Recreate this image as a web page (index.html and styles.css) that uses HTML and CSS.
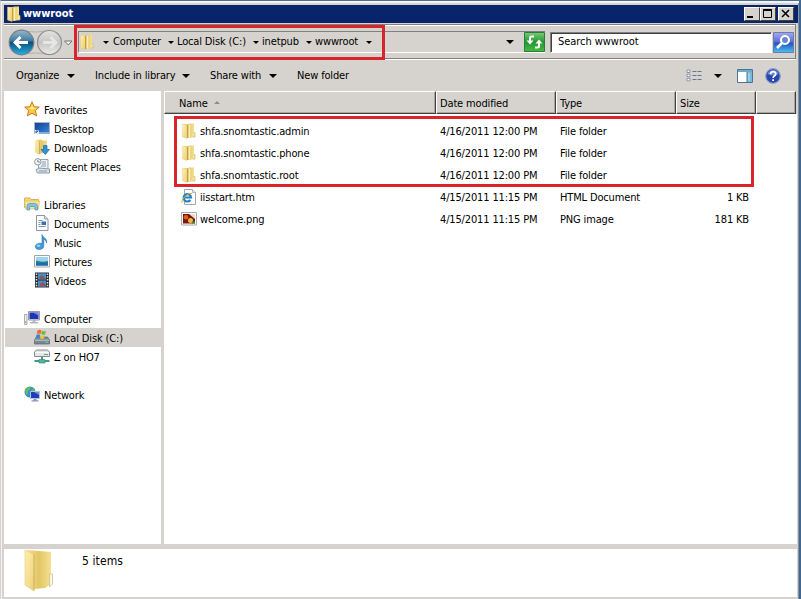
FILE: index.html
```
<!DOCTYPE html>
<html lang="en">
<head>
  <meta charset="UTF-8">
  <meta name="viewport" content="width=device-width, initial-scale=1.0">
  <title>wwwroot</title>
  <link rel="stylesheet" href="styles.css">
</head>
<body>
  <!-- shared icons and gradients -->
  <svg class="defs" width="0" height="0">
    <defs>
      <linearGradient id="gold" x1="0" x2="1" y1="0" y2="0">
        <stop offset="0" stop-color="#f6e08c"/><stop offset=".5" stop-color="#e3c566"/><stop offset="1" stop-color="#f6e190"/>
      </linearGradient>
      <linearGradient id="gold-front" x1="0" x2="1" y1="0" y2="1">
        <stop offset="0" stop-color="#fff0b0"/><stop offset="1" stop-color="#ecd077"/>
      </linearGradient>
      <linearGradient id="screen" x1="0" x2="1" y1="0" y2="1">
        <stop offset="0" stop-color="#123e94"/><stop offset="1" stop-color="#3e86dc"/>
      </linearGradient>
      <linearGradient id="back" x1="0" x2="0" y1="0" y2="1">
        <stop offset="0" stop-color="#9cb6c6"/><stop offset=".42" stop-color="#3f7da4"/><stop offset=".5" stop-color="#07517f"/><stop offset="1" stop-color="#27b2e4"/>
      </linearGradient>
      <linearGradient id="forward" x1="0" x2="0" y1="0" y2="1">
        <stop offset="0" stop-color="#e4e4e3"/><stop offset=".5" stop-color="#c5c5c4"/><stop offset="1" stop-color="#e9e9e8"/>
      </linearGradient>
      <linearGradient id="green" x1="0" x2="0" y1="0" y2="1">
        <stop offset="0" stop-color="#7ecb78"/><stop offset=".5" stop-color="#239632"/><stop offset="1" stop-color="#46bd43"/>
      </linearGradient>
      <linearGradient id="blue" x1="0" x2="0" y1="0" y2="1">
        <stop offset="0" stop-color="#aaa8ec"/><stop offset=".48" stop-color="#5a6cd4"/><stop offset=".52" stop-color="#2450bd"/><stop offset="1" stop-color="#4bc3f0"/>
      </linearGradient>
      <symbol id="folder" viewBox="0 0 16 16">
        <path d="M2 1h5l1-.5h5v13.500l-5 1-6-1z" fill="url(#gold)"/>
        <path d="M1.500 1l4.500 1v13.500l-4.500-1.500z" fill="url(#gold-front)" stroke="#e0c878" stroke-width=".4"/>
        <path d="M6.500 2v13" stroke="#c2a142" stroke-width="1"/>
        <path d="M8.500 1.500v13" stroke="#fbf1c0" stroke-width="1.400"/>
        <path d="M12.500 9.500h1.500v4.500h-2.500" fill="#f6e7a5" stroke="#cdb968" stroke-width=".7"/>
      </symbol>
      <symbol id="star" viewBox="0 0 16 16">
        <path d="M8 .8l2.100 4.900 5.200.4-4 3.500 1.400 5.400L8 12.200l-4.700 2.700 1.300-5.300L.7 6.100l5.200-.4z" fill="#ffc83a" stroke="#c9792a"/>
        <path d="M8 3l1.200 3.500 3 .4-4.200 1.500-4-1.500 3-.4z" fill="#ffec8e"/>
      </symbol>
      <symbol id="desktop" viewBox="0 0 16 16">
        <path d="M.5 2.500h15v11h-15z" fill="url(#screen)" stroke="#a7b4c4"/>
        <path d="M1 12h14v1.500h-14z" fill="#6fb0e6"/>
        <path d="M1 10h4v4h-4z" fill="#d9e9f8"/><path d="M2 13v-2h2M2 13l2.500-2.500" stroke="#2d6cb5" fill="none"/>
      </symbol>
      <symbol id="downloads" viewBox="0 0 16 16">
        <path d="M2 1l5-.5 1 1h5v12l-10 1.500z" fill="url(#gold)"/>
        <path d="M1 1l4.500 1.500v12.500l-4.500-1.500z" fill="url(#gold-front)"/>
        <path d="M5.500 2.500v12.500" stroke="#bea045" stroke-width=".7"/>
        <path d="M9.500 6.500h3.500v4h2.500l-4.200 5-4.300-5h2.500z" fill="#2f94d6" stroke="#1869a8" stroke-width=".7"/>
      </symbol>
      <symbol id="recent" viewBox="0 0 16 16">
        <path d="M4.500 1.500h9.500v10h-9.500z" fill="#eef1f4" stroke="#9ba4ac"/>
        <path d="M8 4h4M8 6h4M7 8h5" stroke="#8fa2b2"/>
        <path d="M2 12l3-2 10.500 1v4h-12z" fill="#dce2e7" stroke="#8d98a2"/>
        <path d="M5 13h8" stroke="#7d9db6"/>
        <circle cx="3.800" cy="3.800" r="3.200" fill="#f7f8fa" stroke="#8d959e"/><path d="M3.800 1.800v2.200h2" stroke="#5a636d" stroke-width=".8" fill="none"/>
      </symbol>
      <symbol id="libraries" viewBox="0 0 16 16">
        <path d="M.5 2h5.500l1 1.500h7.500v8h-14z" fill="#f3d97c" stroke="#cfb35c"/>
        <path d="M.5 5h15l-1 8h-13z" fill="#f7e28e" stroke="#dcc26c" stroke-width=".7"/>
        <path d="M3 14v-3.500q0-3 3-3h4.500q3 0 3 3v3.500h-2.500v-2.500q0-1-1-1h-3.500q-1 0-1 1v2.500z" fill="#7ec4ea" stroke="#4b92be" stroke-width=".7"/>
      </symbol>
      <symbol id="documents" viewBox="0 0 16 16">
        <path d="M2.500.5h8l3.500 3.500v11.500h-11.500z" fill="#fafbfd" stroke="#8c959e"/>
        <path d="M10.500.5v3.500h3.500" fill="#d7dde3" stroke="#8c959e" stroke-width=".8"/>
        <path d="M4.500 5.500h4M4.500 7.500h2M4.500 9.500h2M4.500 11.500h7" stroke="#7d95b0"/><path d="M7.500 6.500h4.500v3.500h-4.500z" fill="#3f70a8"/>
      </symbol>
      <symbol id="music" viewBox="0 0 16 16">
        <path d="M8 .5c.6 3 5.500 3.500 4.500 8.500-.3-2.500-1.500-3.300-2.700-3.800v6.800c0 2-2 3.500-4.500 3.500s-4-1.200-4-3c0-2.400 3.500-4 6.700-2.800z" fill="#3e9ad8" stroke="#2672ab" stroke-width=".6"/>
        <ellipse cx="4.500" cy="11.800" rx="2" ry="1.300" fill="#91d1f1"/>
      </symbol>
      <symbol id="pictures" viewBox="0 0 16 16">
        <path d="M.5 2.500h15v11.500h-15z" fill="#fff" stroke="#9ca5ac"/><path d="M2 4h12v8.500h-12z" fill="#9bd4ee"/>
        <path d="M2 7.500q5 2 12 .5v4.500h-12z" fill="#2c7d86"/><path d="M2 10.500q6-1 12 0v2h-12z" fill="#1d6ab0"/>
      </symbol>
      <symbol id="videos" viewBox="0 0 16 16">
        <path d="M1 .5h14v15h-14z" fill="#272b33"/>
        <path d="M4 1.200h8v6.300h-8zM4 8.500h8v6.300h-8z" fill="#4a8fc4"/>
        <path d="M5 5l3-2 3 3v1.500h-5zM5 12l4-2 3 3v1.500h-5z" fill="#8c5463"/>
        <path d="M2.500 1.500v13M13.500 1.500v13" stroke="#dfe5ea" stroke-width="1.500" stroke-dasharray="1.500 1.300"/>
      </symbol>
      <symbol id="computer" viewBox="0 0 16 16">
        <path d="M4.500 1.500h11v8.500h-11z" fill="#e0dfe0" stroke="#989aa5"/><path d="M5.500 2.500h9v6.500h-9z" fill="#1b35b5"/><path d="M9 2.500h5.500v3z" fill="#7690e6"/>
        <path d="M8.500 10h3v2h2.500v1.500h-8v-1.500h2.500z" fill="#b4b6c0"/>
        <path d="M.5 4.500h2.500v10h-2.500z" fill="#eeeef0" stroke="#9699a2" stroke-width=".8"/><path d="M1 12h1.500" stroke="#4c9b4e"/>
      </symbol>
      <symbol id="disk" viewBox="0 0 16 16">
        <path d="M.5 11l2-3h11l2 3v4h-15z" fill="#7a8995" stroke="#53616e" stroke-width=".7"/><path d="M1 11.200h14" stroke="#c3cdd5"/><path d="M11.500 13.300h2.500" stroke="#62dc64" stroke-width="1.200"/>
        <path d="M3.500 1.500q2-1.500 4 0l-1 3.500q-2-1-3.800 0z" fill="#ea6b32"/><path d="M8.200 1.700q2 1 3.800 0l-1 3.700q-2 1-3.800-.3z" fill="#6eb73e"/>
        <path d="M2.500 5.700q2-1 3.800 0l-1 3.500q-2-1-3.700 0z" fill="#3987ce"/><path d="M7 6q2 1 3.800 0l-1 3.500q-2 1-3.800-.3z" fill="#f7c431"/>
      </symbol>
      <symbol id="netdrive" viewBox="0 0 16 16">
        <path d="M.5 4l2-2h11l2 2v4.500h-15z" fill="#e4e6e8" stroke="#868b90"/><path d="M1 4.500h14" stroke="#fff"/><path d="M10 6.500h4" stroke="#5aaa63"/>
        <path d="M8 9v3.500M.5 13h15" stroke="#439b86" stroke-width="2"/><path d="M5 11.500h6v3.500h-6z" fill="#55b4a0" stroke="#2f8270" stroke-width=".6"/>
      </symbol>
      <symbol id="network" viewBox="0 0 16 16">
        <circle cx="6" cy="6" r="5.500" fill="#2e8fd1"/><path d="M1 4q3-4 6-3l-1 3-2 1v3l-2 1zM7 4l3-2 1.500 4-3 1z" fill="#67bb5a"/>
        <path d="M6.500 5.500h9v7h-9z" fill="#1c3eb8" stroke="#b8c3e2"/><path d="M10 6h5v3z" fill="#6e90e8"/><path d="M9.500 13h3v1.300h2v1.200h-7v-1.200h2z" fill="#8c98b2"/>
      </symbol>
      <symbol id="htm" viewBox="0 0 16 16">
        <path d="M3.500.5h8l3 3v12h-11z" fill="#fdfdfd" stroke="#a2a7ab"/><path d="M11.500.5v3h3" fill="#dfe3e6" stroke="#a2a7ab" stroke-width=".8"/>
        <path d="M9.300 11a3.700 3.700 0 1 1 .7-2.500h-6.500" fill="none" stroke="#2080c6" stroke-width="2.200"/>
        <path d="M1.200 13.800q-1.500-2 2.500-6t7.500-3.500" fill="none" stroke="#e0b02f" stroke-width="1"/>
      </symbol>
      <symbol id="png" viewBox="0 0 16 16">
        <path d="M.5 1.500h15v12.500h-15z" fill="#fbfbfb" stroke="#a8a8a8"/><path d="M2 3h12v9.500h-12z" fill="#7c1710"/>
        <circle cx="5" cy="6.300" r="2.300" fill="#d6641e"/><circle cx="9.500" cy="9.500" r="2.500" fill="#f0b93c"/><path d="M8 3h6v5z" fill="#f3dfc0"/><path d="M11 10.500h3v2h-3z" fill="#4a8340"/>
      </symbol>
    </defs>
  </svg>

  <div class="window">
    <header class="titlebar">
      <svg class="icon"><use href="#folder"/></svg>
      <h1 class="title">wwwroot</h1>
      <div class="controls">
        <button class="control"><svg width="13" height="12"><path d="M2 9h6" stroke="#000" stroke-width="2"/></svg></button>
        <button class="control"><svg width="13" height="12"><path d="M2 2h9" stroke="#000" stroke-width="2"/><path d="M2.500 1v8.500h8v-8.500" fill="none" stroke="#000"/></svg></button>
        <button class="control control-close"><svg width="13" height="12"><path d="M3 2l7 7M10 2l-7 7" stroke="#000" stroke-width="1.600"/></svg></button>
      </div>
    </header>

    <nav class="navbar">
      <svg class="travel" width="70" height="33" viewBox="0 0 70 33">
        <path d="M17 4q14 4 29 0M17 29q14-4 29 0" fill="none" stroke="#aeb0b1"/>
        <circle cx="17.500" cy="16.500" r="12.300" fill="url(#back)" stroke="#767f88" stroke-width="1.200"/>
        <path d="M11 16.500h13M16.500 11l-5.500 5.500 5.500 5.500" fill="none" stroke="#fff" stroke-width="2.800"/>
        <circle cx="45.500" cy="16.500" r="12" fill="url(#forward)" stroke="#909294" stroke-width="1.200"/>
        <path d="M39 16.500h13M46.500 11l5.500 5.500-5.500 5.500" fill="none" stroke="#e6e6e6" stroke-width="2.800"/>
        <path d="M60.500 15h7.500l-3.700 4z" fill="#eee" stroke="#777"/>
      </svg>
      <div class="address">
        <svg class="icon"><use href="#folder"/></svg>
        <ol class="crumbs">
          <li class="crumb crumb-root"><i class="arrow small"></i></li>
          <li class="crumb crumb-computer">Computer<i class="arrow small"></i></li>
          <li class="crumb crumb-disk">Local Disk (C:)<i class="arrow small"></i></li>
          <li class="crumb crumb-inetpub">inetpub<i class="arrow small"></i></li>
          <li class="crumb crumb-wwwroot">wwwroot<i class="arrow small"></i></li>
        </ol>
        <i class="arrow"></i>
        <svg class="refresh" width="21" height="20" viewBox="0 0 21 20">
          <path d="M.5.500h20v19h-20z" fill="url(#green)" stroke="#2c7c35"/>
          <path d="M10 4.500h-2.500q-1.500 0-1.500 1.500v3M11 15.500h2.500q1.500 0 1.500-1.500v-3" fill="none" stroke="#fff" stroke-width="2"/>
          <path d="M2.500 8.500h7l-3.500 4zM11.500 11.500h7l-3.500-4z" fill="#fff"/>
        </svg>
      </div>
      <div class="search">Search wwwroot</div>
      <svg class="search-button" width="21" height="21" viewBox="0 0 21 21">
        <path d="M.5.500h20v20h-20z" fill="url(#blue)" stroke="#637eb8"/>
        <circle cx="12" cy="8" r="4" fill="#6686dc" stroke="#fff" stroke-width="2"/>
        <path d="M9 11l-5 5" stroke="#fff" stroke-width="2.600"/>
      </svg>
      <div class="highlight highlight-path"></div>
    </nav>

    <div class="toolbar">
      <span class="command cmd-organize">Organize<i class="arrow"></i></span>
      <span class="command cmd-include">Include in library<i class="arrow"></i></span>
      <span class="command cmd-share">Share with<i class="arrow"></i></span>
      <span class="command cmd-new">New folder</span>
      <div class="tools">
        <svg width="16" height="13" viewBox="0 0 16 13">
          <path d="M1 1h3v2.500H1zM1 5.200h3v2.500H1zM1 9.400h3v2.500H1z" fill="#fff" stroke="#8794a8"/>
          <path d="M6.500 2.500h4M11.500 2.500h4M6.500 6.500h4M11.500 6.500h4M6.500 10.500h4M11.500 10.500h4" stroke="#66758e"/>
        </svg>
        <i class="arrow"></i>
        <svg class="preview" width="16" height="14" viewBox="0 0 16 14">
          <path d="M.5.500h15v13H.5z" fill="#fff" stroke="#4c7690"/><path d="M1 1h14v2H1z" fill="#6faac9"/><path d="M10 3h5v10h-5z" fill="#79bad8"/><path d="M10 3v10" stroke="#447c9b"/><path d="M12 4v8" stroke="#c2e3f1"/>
        </svg>
        <svg class="help" width="16" height="16" viewBox="0 0 16 16">
          <circle cx="8" cy="8" r="7.300" fill="#2747ad" stroke="#8f9cc9" stroke-width="1.200"/><path d="M2.500 6a5.800 5.800 0 0 1 11 0q-5 3-11 0z" fill="#6a86d4"/>
          <path d="M5.500 6.200q0-2.500 2.600-2.500t2.600 2.200q0 1.200-1.400 2-1.200.7-1.200 2" fill="none" stroke="#fff" stroke-width="1.700"/><path d="M7.200 11.200h1.800v1.700H7.200z" fill="#fff"/>
        </svg>
      </div>
    </div>

    <div class="content">
      <aside class="tree">
        <ul class="group">
          <li class="node root"><svg class="icon"><use href="#star"/></svg><span class="label">Favorites</span></li>
          <li class="node"><svg class="icon"><use href="#desktop"/></svg><span class="label">Desktop</span></li>
          <li class="node"><svg class="icon"><use href="#downloads"/></svg><span class="label">Downloads</span></li>
          <li class="node"><svg class="icon"><use href="#recent"/></svg><span class="label">Recent Places</span></li>
        </ul>
        <ul class="group">
          <li class="node root"><svg class="icon"><use href="#libraries"/></svg><span class="label">Libraries</span></li>
          <li class="node"><svg class="icon"><use href="#documents"/></svg><span class="label">Documents</span></li>
          <li class="node"><svg class="icon"><use href="#music"/></svg><span class="label">Music</span></li>
          <li class="node"><svg class="icon"><use href="#pictures"/></svg><span class="label">Pictures</span></li>
          <li class="node"><svg class="icon"><use href="#videos"/></svg><span class="label">Videos</span></li>
        </ul>
        <ul class="group">
          <li class="node root"><svg class="icon"><use href="#computer"/></svg><span class="label">Computer</span></li>
          <li class="node selected"><svg class="icon"><use href="#disk"/></svg><span class="label">Local Disk (C:)</span></li>
          <li class="node"><svg class="icon"><use href="#netdrive"/></svg><span class="label">Z on HO7</span></li>
        </ul>
        <ul class="group">
          <li class="node root"><svg class="icon"><use href="#network"/></svg><span class="label">Network</span></li>
        </ul>
      </aside>

      <main class="files">
        <div class="row head">
          <div class="cell name">Name<i class="sort"></i></div>
          <div class="cell">Date modified</div>
          <div class="cell">Type</div>
          <div class="cell">Size</div>
          <div class="cell"></div>
        </div>
        <div class="list">
          <div class="row">
            <div class="cell name"><svg class="icon"><use href="#folder"/></svg>shfa.snomtastic.admin</div>
            <div class="cell">4/16/2011 12:00 PM</div>
            <div class="cell">File folder</div>
          </div>
          <div class="row">
            <div class="cell name"><svg class="icon"><use href="#folder"/></svg>shfa.snomtastic.phone</div>
            <div class="cell">4/16/2011 12:00 PM</div>
            <div class="cell">File folder</div>
          </div>
          <div class="row">
            <div class="cell name"><svg class="icon"><use href="#folder"/></svg>shfa.snomtastic.root</div>
            <div class="cell">4/16/2011 12:00 PM</div>
            <div class="cell">File folder</div>
          </div>
          <div class="row">
            <div class="cell name"><svg class="icon"><use href="#htm"/></svg>iisstart.htm</div>
            <div class="cell">4/15/2011 11:15 PM</div>
            <div class="cell">HTML Document</div>
            <div class="cell size">1 KB</div>
          </div>
          <div class="row">
            <div class="cell name"><svg class="icon"><use href="#png"/></svg>welcome.png</div>
            <div class="cell">4/15/2011 11:15 PM</div>
            <div class="cell">PNG image</div>
            <div class="cell size">181 KB</div>
          </div>
        </div>
        <div class="highlight highlight-rows"></div>
      </main>
    </div>

    <footer class="details">
      <svg width="32" height="44" viewBox="0 0 32 44">
        <path d="M3 1l24 2v32l-6 4-11 1z" fill="url(#gold)"/>
        <path d="M26 25h2.500v10l-3 3v-13z" fill="#faf6df" stroke="#cfc290" stroke-width=".8"/>
        <path d="M1 1l9 4.500v36.500l-9-6z" fill="url(#gold-front)" stroke="#e3cd7d" stroke-width=".6"/>
        <path d="M10 5.500v36" stroke="#c9ac55" stroke-width=".8"/>
      </svg>
      <span class="count">5 items</span>
    </footer>
  </div>
</body>
</html>
```
FILE: styles.css
```
* {
  margin: 0;
  padding: 0;
  box-sizing: border-box;
}

body {
  width: 801px;
  height: 599px;
  overflow: hidden;
  background: #d6d3ce;
  font-family: "DejaVu Sans Condensed", "DejaVu Sans", sans-serif;
  font-size: 11px;
  font-stretch: condensed;
  line-height: 14px;
  letter-spacing: -0.15px;
  color: #000;
  white-space: nowrap;
}

ul, ol {
  list-style: none;
}

svg {
  display: block;
  flex: none;
}

.defs {
  position: absolute;
}

.icon {
  width: 16px;
  height: 16px;
}

.window {
  display: flex;
  flex-direction: column;
  height: 599px;
  padding: 3px 1px 2px 3px;
  border-top: 1px solid #4d7196;
  border-right: 2px solid #3f6794;
  border-left: 1px solid #d6d3ce;
  box-shadow: inset 0 2px #f4f4f6, inset -1px 0 #8b9298, inset 1px 0 #f4f4f4;
}

/* title bar */
.titlebar {
  display: flex;
  align-items: center;
  height: 18px;
  padding: 0 4px 0 2px;
  margin-top: 1px;
  background: #08246b;
  color: #fff;
}

.title {
  flex: 1;
  margin-left: 1px;
  font-size: 11px;
  letter-spacing: -0.05px;
}

.controls {
  display: flex;
  margin-bottom: 1px;
}

.control {
  width: 16px;
  height: 14px;
  border: 1px solid;
  border-color: #fff #404040 #404040 #fff;
  background: #d6d3ce;
}

.control-close {
  margin-left: 2px;
}

/* address bar row */
.navbar {
  position: relative;
  display: flex;
  align-items: center;
  height: 35px;
  margin: 1px 2px 0 0;
  padding-top: 1px;
  border: 1px solid #808080;
  border-width: 1px 1px 1px 0;
  box-shadow: 0 1px #fff, inset 0 1px #fff;
}

.address {
  display: flex;
  align-items: center;
  width: 467px;
  height: 22px;
  margin-left: 4px;
  border-top: 1px solid #808080;
  border-left: 1px solid #808080;
  border-bottom: 1px solid #fff;
}

.crumbs {
  display: flex;
  flex: 1;
}

.crumb {
  display: flex;
  align-items: center;
  justify-content: space-between;
  margin-right: 3px;
}

.crumb-root { width: 15px; padding-left: 8px; }
.crumb-computer { width: 61px; }
.crumb-disk { width: 82px; }
.crumb-inetpub { width: 50px; }
.crumb-wwwroot { width: 57px; }

.arrow {
  flex: none;
  border: 4px solid transparent;
  border-top-color: #000;
  border-bottom: 0;
}

.arrow.small {
  border-width: 3px;
  border-bottom: 0;
}

.refresh {
  margin-left: 10px;
}

.search {
  display: flex;
  align-items: center;
  width: 222px;
  height: 21px;
  margin-left: 5px;
  padding-left: 7px;
  border: 1px solid #808080;
  border-right-color: #fff;
  border-bottom-color: #fff;
  background: #fff;
  box-shadow: inset 1px 1px #404040;
  letter-spacing: -0.05px;
}

.search-button {
  margin-left: 1px;
}

.highlight {
  position: absolute;
  border: 3px solid #d9242c;
}

.highlight-path {
  top: 0;
  left: 70px;
  width: 311px;
  height: 35px;
}

/* command bar */
.toolbar {
  display: flex;
  align-items: center;
  height: 32px;
  padding: 1px 0 0 12px;
}

.command {
  display: flex;
  align-items: center;
  justify-content: space-between;
  margin-right: 20px;
}

.cmd-organize { width: 59px; }
.cmd-include { width: 95px; }
.cmd-share { width: 67px; }

.tools {
  display: flex;
  align-items: center;
  margin-left: auto;
  padding-right: 17px;
}

.tools .arrow {
  margin-left: 12px;
}

.preview {
  margin-left: 15px;
}

.help {
  margin-left: 12px;
}

/* folder tree and file list */
.content {
  display: flex;
  flex: 1;
  gap: 3px;
  min-height: 0;
}

.tree {
  width: 157px;
  padding: 9px 0 0 1px;
  background: #fff;
}

.group {
  margin-bottom: 19px;
}

.node {
  display: flex;
  align-items: center;
  height: 19px;
  padding-left: 29px;
}

.node .icon {
  margin: 0 4px 1px 0;
}

.node .label {
  padding-top: 2px;
}

.node.root {
  padding-left: 19px;
}

.node.selected {
  background: #d6d3ce;
}

.files {
  position: relative;
  flex: 1;
  margin-right: 1px;
  background: #fff;
}

.row {
  display: grid;
  grid-template-columns: 272px 120px 120px 80px 40px;
  align-items: center;
  height: 22px;
}

.cell {
  display: flex;
  align-items: center;
  padding: 1px 0 0 4px;
}

.cell.name {
  padding-left: 17px;
}

.cell .icon {
  margin: 0 3px 1px 0;
}

.cell.size {
  justify-content: flex-end;
  padding-right: 7px;
}

.head {
  height: 23px;
  background: #d6d3ce;
}

.head .cell {
  height: 23px;
  border: 1px solid;
  border-color: #fff #404040 #404040 #fff;
  box-shadow: inset -1px -1px #a9a6a2;
  padding: 2px 0 0 3px;
}

.head .cell.name {
  padding-left: 14px;
}

.sort {
  margin: 0 0 2px 6px;
  border: 3px solid transparent;
  border-top: 0;
  border-bottom-color: #8c8c8c;
}

.list {
  padding-top: 6px;
}

.highlight-rows {
  top: 25px;
  left: 10px;
  width: 580px;
  height: 71px;
}

/* details pane */
.details {
  display: flex;
  height: 48px;
  margin: 5px 1px 0 0;
  padding-left: 20px;
  background: #fff;
}

.count {
  margin: 5px 0 0 26px;
  font-size: 12px;
  letter-spacing: 0.1px;
}
```
